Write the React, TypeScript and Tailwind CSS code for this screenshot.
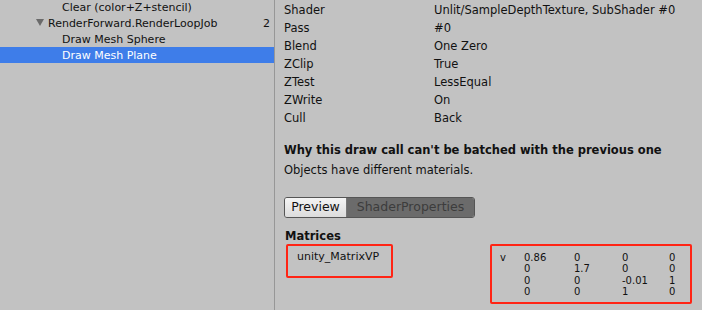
import React from "react";

const font = { fontFamily: '"DejaVu Sans", Verdana, sans-serif' };

function TreeRow({
  indent,
  text,
  selected,
  triangle,
  count,
  first,
}: {
  indent: number;
  text: string;
  selected?: boolean;
  triangle?: boolean;
  count?: string;
  first?: boolean;
}) {
  return (
    <div
      className={`flex items-center ${first ? "h-[15px]" : "h-4"} pr-[4px] ${
        selected ? "bg-[#3e7de9] text-white" : "text-[#111]"
      }`}
      style={{ paddingLeft: indent }}
    >
      {triangle && (
        <svg width="9" height="8" viewBox="0 0 9 8" className="mr-[3px]">
          <path d="M0 0 L8 0 L4 7 Z" fill="#6a6a6a" />
        </svg>
      )}
      <span className="flex-1 whitespace-nowrap">{text}</span>
      {count && <span>{count}</span>}
    </div>
  );
}

const props: [string, string][] = [
  ["Shader", "Unlit/SampleDepthTexture, SubShader #0"],
  ["Pass", "#0"],
  ["Blend", "One Zero"],
  ["ZClip", "True"],
  ["ZTest", "LessEqual"],
  ["ZWrite", "On"],
  ["Cull", "Back"],
];

const matrix = [
  ["0.86", "0", "0", "0"],
  ["0", "1.7", "0", "0"],
  ["0", "0", "-0.01", "1"],
  ["0", "0", "1", "0"],
];

export default function App() {
  return (
    <div
      className="w-[702px] h-[310px] bg-[#c2c2c2] flex overflow-hidden text-[11px] leading-none"
      style={font}
    >
      {/* Left tree panel */}
      <div className="w-[274px] flex flex-col">
        <TreeRow first indent={62} text="Clear (color+Z+stencil)" />
        <TreeRow indent={36} triangle text="RenderForward.RenderLoopJob" count="2" />
        <TreeRow indent={62} text="Draw Mesh Sphere" />
        <TreeRow indent={62} text="Draw Mesh Plane" selected />
      </div>
      <div className="w-px bg-[#979797]" />

      {/* Right details panel */}
      <div className="flex-1 flex flex-col pl-[9px] pt-[2px] text-[#111] text-[11.5px]">
        {props.map(([k, v]) => (
          <div key={k} className="flex items-center h-[18px]">
            <span className="w-[150px]">{k}</span>
            <span className="whitespace-nowrap">{v}</span>
          </div>
        ))}
        <div className="h-[14px]" />
        <div className="flex items-center h-[18px] font-bold whitespace-nowrap">
          Why this draw call can't be batched with the previous one
        </div>
        <div className="flex items-center h-[18px] mt-[2px]">Objects have different materials.</div>

        <div className="mt-[17px] flex h-[21px] w-[191px] rounded-[3px] border border-[#555] overflow-hidden">
          <div className="w-[62px] flex items-center justify-center bg-gradient-to-b from-[#f4f4f4] to-[#dcdcdc] border-r border-[#777] text-[12.5px] text-[#111]">
            Preview
          </div>
          <div className="flex-1 flex items-center justify-center bg-[#6b6b6b] text-[12.5px] text-[#3c3c3c]">
            ShaderProperties
          </div>
        </div>

        <div className="mt-[13px] font-bold h-[12px] flex items-center pl-px text-[11.5px]">
          Matrices
        </div>
        <div className="flex items-start mt-[1px] text-[11px]">
          <div className="ml-[2px] w-[107px] h-[34px] border-2 border-[#ff2414] rounded-[2px] pl-[9px] pt-[5px]">
            unity_MatrixVP
          </div>
          <div className="ml-[97px] w-[202px] h-[60px] border-2 border-[#ff2414] rounded-[2px] pl-[8px] pt-[6px] text-[10px]">
            <div className="flex flex-col gap-0">
              {matrix.map((row, i) => (
                <div key={i} className="flex h-[11.5px] items-center">
                  <span className="w-[24px]">{i === 0 ? "v" : ""}</span>
                  <span className="w-[50px]">{row[0]}</span>
                  <span className="w-[48px]">{row[1]}</span>
                  <span className="w-[47px]">{row[2]}</span>
                  <span>{row[3]}</span>
                </div>
              ))}
            </div>
          </div>
        </div>
      </div>
    </div>
  );
}
